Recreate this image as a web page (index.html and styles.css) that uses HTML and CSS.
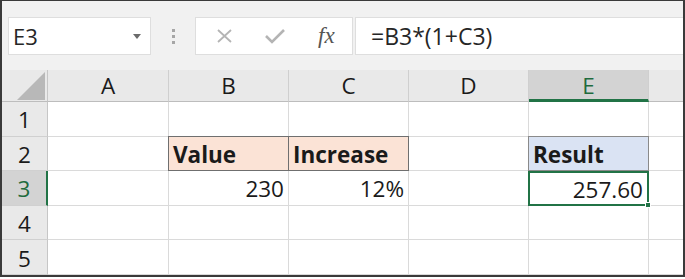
FILE: index.html
```html
<!DOCTYPE html>
<html lang="en">
<head>
    <meta charset="UTF-8">
    <meta name="viewport" content="width=device-width, initial-scale=1.0">
    <title>Increase by percentage</title>
    <link rel="stylesheet" href="styles.css">
</head>
<body>

    <div class="frame">
        <div class="toolbar">
            <div class="namebox">
                <span>E3</span>
                <span class="arrow"></span>
            </div>
            <div class="dots">
                <span></span><span></span><span></span>
            </div>
            <div class="fx-box">
                <svg class="icon" width="20" height="16" viewBox="0 0 20 16">
                    <path d="M3 2 L16 14 M16 2 L3 14" stroke="#b4b4b4" stroke-width="1.8" fill="none"/>
                </svg>
                <svg class="icon" width="22" height="16" viewBox="0 0 22 16">
                    <path d="M2 8 L8 14 L20 2" stroke="#b4b4b4" stroke-width="2.6" fill="none"/>
                </svg>
                <span class="fx">fx</span>
            </div>
            <div class="formula">=B3*(1+C3)</div>
        </div>

        <div class="sheet">
            <div class="corner"><span class="tri"></span></div>
            <div class="colhead">A</div>
            <div class="colhead">B</div>
            <div class="colhead">C</div>
            <div class="colhead">D</div>
            <div class="colhead active">E</div>
            <div class="colhead last"></div>

            <div class="rowhead">1</div>
            <div class="cell"></div><div class="cell"></div><div class="cell"></div><div class="cell"></div><div class="cell"></div><div class="cell last"></div>

            <div class="rowhead">2</div>
            <div class="cell"></div>
            <div class="cell label peach">Value</div>
            <div class="cell label peach">Increase</div>
            <div class="cell"></div>
            <div class="cell label blue">Result</div>
            <div class="cell last"></div>

            <div class="rowhead active">3</div>
            <div class="cell"></div>
            <div class="cell num">230</div>
            <div class="cell num">12%</div>
            <div class="cell"></div>
            <div class="cell num selected">257.60<span class="handle"></span></div>
            <div class="cell last"></div>

            <div class="rowhead">4</div>
            <div class="cell"></div><div class="cell"></div><div class="cell"></div><div class="cell"></div><div class="cell"></div><div class="cell last"></div>

            <div class="rowhead">5</div>
            <div class="cell"></div><div class="cell"></div><div class="cell"></div><div class="cell"></div><div class="cell"></div><div class="cell last"></div>
        </div>
    </div>

</body>
</html>
```

FILE: styles.css
```css
* {
    margin: 0;
    padding: 0;
    box-sizing: border-box;
    font-family: 'Open Sans', 'Liberation Sans', sans-serif;
}

body {
    width: 685px;
    height: 279px;
    background: #ffffff;
}

.frame {
    width: 685px;
    height: 277px;
    border: 2px solid #3a3a3a;
    border-top-width: 1px;
    background: #ffffff;
    overflow: hidden;
}

/* formula bar */

.toolbar {
    height: 69px;
    background: #f1f1f1;
    display: flex;
    align-items: flex-start;
    padding: 16px 0 0 6px;
    color: #262626;
}

.namebox {
    width: 143px;
    height: 38px;
    background: #fff;
    border: 1px solid #dedede;
    display: flex;
    align-items: center;
    justify-content: space-between;
    padding: 0 9px 0 4px;
    font-size: 22px;
}

.arrow {
    width: 0;
    height: 0;
    border-left: 4px solid transparent;
    border-right: 4px solid transparent;
    border-top: 5px solid #6b6b6b;
}

.dots {
    width: 44px;
    height: 38px;
    display: flex;
    flex-direction: column;
    align-items: center;
    justify-content: center;
    gap: 3px;
}

.dots span {
    width: 3px;
    height: 3px;
    background: #a6a6a6;
}

.fx-box {
    width: 158px;
    height: 38px;
    background: #fff;
    border: 1px solid #dedede;
    display: flex;
    align-items: center;
    padding-left: 19px;
    gap: 29px;
}

.fx {
    font-family: 'Liberation Serif', serif;
    font-style: italic;
    font-size: 23px;
    color: #555;
    margin-left: 3px;
}

.formula {
    flex: 1;
    height: 38px;
    margin-left: 2px;
    background: #fff;
    border: 1px solid #dedede;
    border-right: none;
    padding-left: 15px;
    font-size: 23px;
    line-height: 36px;
}

/* grid */

.sheet {
    display: grid;
    grid-template-columns: 46px 121px 120px 120px 120px 120px 1fr;
    grid-template-rows: 32px repeat(5, 34.6px);
    color: #1a1a1a;
    font-size: 22.5px;
}

.corner {
    background: #e9e9e9;
    border-right: 1px solid #c6c6c6;
    border-bottom: 1px solid #bdbdbd;
    position: relative;
}

.tri {
    position: absolute;
    right: 2px;
    bottom: 1px;
    width: 0;
    height: 0;
    border-left: 28px solid transparent;
    border-bottom: 28px solid #b8b8b8;
}

.colhead {
    background: #e9e9e9;
    border-right: 1px solid #cfcfcf;
    border-bottom: 1px solid #bdbdbd;
    display: flex;
    align-items: center;
    justify-content: center;
    line-height: 1;
    padding-top: 2px;
}

.colhead.last {
    border-right: none;
}

.colhead.active {
    background: #d3d3d3;
    color: #1f6b3e;
    border-bottom: 3px solid #217346;
    padding-top: 4px;
}

.rowhead {
    background: #e9e9e9;
    border-right: 1px solid #c6c6c6;
    border-bottom: 1px solid #d0d0d0;
    display: flex;
    align-items: center;
    justify-content: center;
    padding-top: 2px;
}

.rowhead.active {
    background: #d3d3d3;
    color: #1f6b3e;
    border-right: 2px solid #217346;
}

.cell {
    border-right: 1px solid #dadada;
    border-bottom: 1px solid #dadada;
    display: flex;
    align-items: center;
    padding: 2px 4px 0;
    white-space: nowrap;
}

.cell.last {
    border-right: none;
}

.label {
    font-weight: 700;
    border: 1px solid #6f6f6f;
    margin: -1px 0 0 -1px;
}

.peach {
    background: #fbe3d6;
}

.peach + .peach {
    margin-left: -1px;
}

.blue {
    background: #dae3f3;
    border-color: #8a8a8a;
}

.num {
    justify-content: flex-end;
}

.selected {
    position: relative;
    border: 2px solid #217346;
    margin: 0 0 0 -1px;
}

.handle {
    position: absolute;
    right: -4px;
    bottom: -4px;
    width: 6px;
    height: 6px;
    background: #217346;
    border: 1px solid #fff;
}
```
